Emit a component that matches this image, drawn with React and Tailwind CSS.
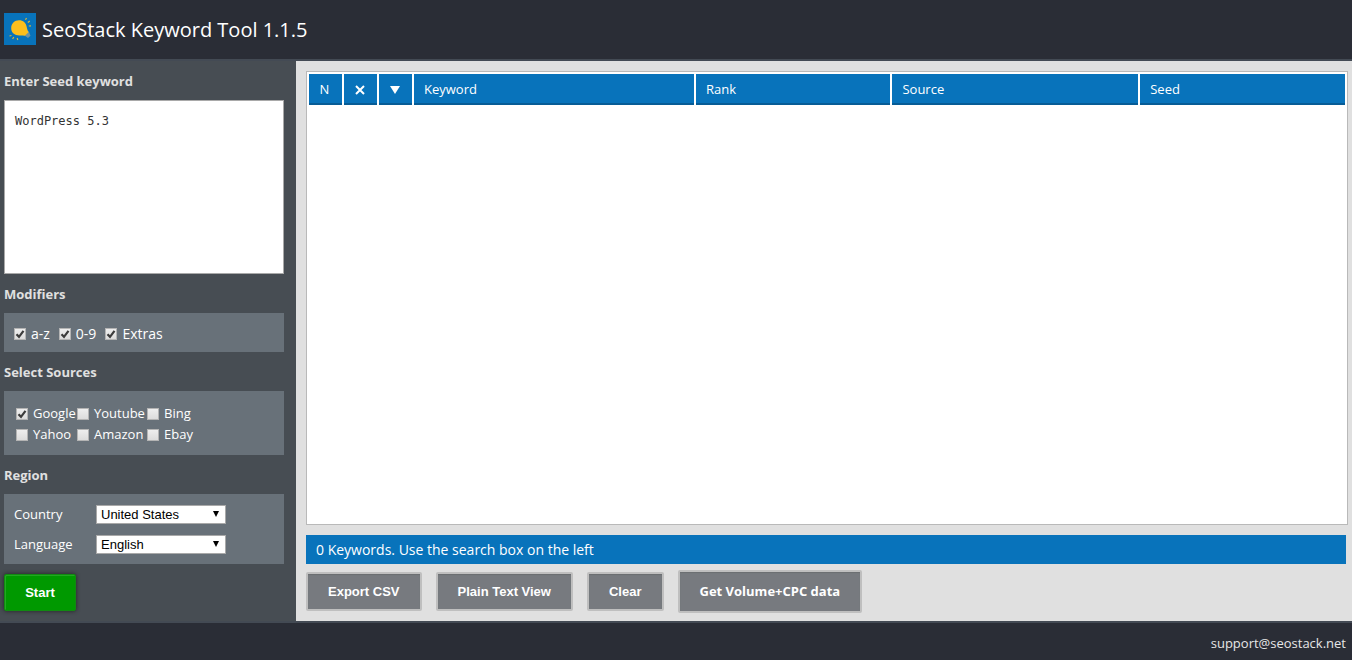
import { useState } from 'react';

const modifierList = ['a-z', '0-9', 'Extras'];
const sourceList = ['Google', 'Youtube', 'Bing', 'Yahoo', 'Amazon', 'Ebay'];

function Logo() {
  return (
    <svg className="w-8 h-8 shrink-0" viewBox="0 0 32 32" aria-hidden="true">
      <rect width="32" height="32" fill="#0873bb" />
      <path d="M20.5 22.500l4.200-4.500 1.800 4.800-2.500 2.200z" fill="#6f93a3" />
      <path d="M7.200 15.200c0-4.600 3.300-8 7.800-8 4.200 0 7 2.600 7.600 6.200.5 2.600 1.100 4.200 1.900 5.800l-3.700 3.600c-2-.5-3.400-.4-5.400-.4-4.800 0-8.200-2.900-8.200-7.200z" fill="#fdbf1d" />
      <path d="M21.500 6.800l1-1.800M23.800 9.500l2-1.500M24.800 13l2.200-.2M7.500 22.500l-2 .5M9.800 24l-1.200 2M13.200 25l.6 2" stroke="#d9b53a" strokeWidth="1.200" />
    </svg>
  );
}

function CheckOption({ name, checked, onChange }) {
  return (
    <label className="flex items-center gap-[5px]">
      <span className="relative flex">
        <input
          type="checkbox"
          checked={checked}
          onChange={onChange}
          className="peer appearance-none w-3 h-3 border border-[#b4b4b4] bg-linear-to-b from-[#eeeeee] to-[#dcdcdc]"
        />
        <svg className="absolute inset-0 hidden peer-checked:block pointer-events-none" viewBox="0 0 12 12" aria-hidden="true">
          <path d="M2.500 6.200l2.500 2.600 4.500-6" fill="none" stroke="#3c3c3c" strokeWidth="2.200" />
        </svg>
      </span>
      {name}
    </label>
  );
}

function SelectRow({ id, label, options }) {
  return (
    <div className="flex items-center h-[30px]">
      <label htmlFor={id} className="w-[82px] pt-0.5">{label}</label>
      <div className="relative">
        <select id={id} className="block appearance-none w-[130px] h-[19px] pl-1 bg-white border border-[#a9a9a9] font-['Liberation_Sans',sans-serif] text-[13px] leading-[17px] text-black">
          {options.map((option) => (
            <option key={option}>{option}</option>
          ))}
        </select>
        <svg className="absolute right-1.5 top-1.5 w-2 h-1.5 pointer-events-none" viewBox="0 0 8 6" aria-hidden="true">
          <path d="M1 0h6L4 6z" fill="#000" />
        </svg>
      </div>
    </div>
  );
}

function SideHeading({ children }) {
  return <h2 className="pt-[11px] pb-[9px] leading-[19px] text-[13px] font-bold text-[#e0e0e0]">{children}</h2>;
}

function GreyButton({ children }) {
  return (
    <button type="button" className="h-[39px] px-5 rounded-xs bg-[#777a7f] border-2 border-[#bfbfbf] shadow-[inset_0_1px_1px_#6b6e72] font-['Liberation_Sans',sans-serif] text-[13px] font-bold text-white">
      {children}
    </button>
  );
}

function App() {
  const [seed, setSeed] = useState('WordPress 5.3');
  const [selected, setSelected] = useState(['a-z', '0-9', 'Extras', 'Google']);

  const toggle = (name) => {
    setSelected((prev) => (prev.includes(name) ? prev.filter((n) => n !== name) : [...prev, name]));
  };

  return (
    <div className="min-h-screen flex flex-col bg-[#2a2d36] font-['Open_Sans',sans-serif] text-[13px] text-white">
      <header className="flex items-center gap-1.5 h-[59px] px-1 pb-0.5">
        <Logo />
        <h1 className="pt-0.5 text-xl">SeoStack Keyword Tool 1.1.5</h1>
      </header>

      <div className="flex-1 flex border-y-2 border-[#434a54]">
        <aside className="w-[296px] shrink-0 pl-1 pr-3 pb-[9px] bg-[#474d53]">
          <SideHeading><label htmlFor="seed">Enter Seed keyword</label></SideHeading>
          <textarea
            id="seed"
            value={seed}
            onChange={(e) => setSeed(e.target.value)}
            spellCheck={false}
            className="block w-full h-[174px] p-2.5 resize-none bg-white border border-[#a9a9a9] font-['DejaVu_Sans_Mono',monospace] text-xs leading-5 text-[#333333]"
          />

          <SideHeading>Modifiers</SideHeading>
          <div className="flex items-center gap-[9px] h-[39px] px-2.5 pt-0.5 bg-[#687179] text-sm">
            {modifierList.map((name) => (
              <CheckOption key={name} name={name} checked={selected.includes(name)} onChange={() => toggle(name)} />
            ))}
          </div>

          <SideHeading>Select Sources</SideHeading>
          <div className="grid grid-cols-[61px_70px_1fr] auto-rows-[21px] h-16 px-3 py-3 bg-[#687179]">
            {sourceList.map((name) => (
              <CheckOption key={name} name={name} checked={selected.includes(name)} onChange={() => toggle(name)} />
            ))}
          </div>

          <SideHeading>Region</SideHeading>
          <div className="px-2.5 py-[5px] bg-[#687179]">
            <SelectRow id="country" label="Country" options={['United States', 'United Kingdom', 'Canada']} />
            <SelectRow id="language" label="Language" options={['English', 'Spanish', 'German']} />
          </div>

          <button type="button" className="mt-2.5 w-[72px] h-[37px] rounded-xs bg-[#009900] border border-[#118a11] shadow-[0_0_4px_#222222,inset_1px_1px_0_#22a822] font-['Liberation_Sans',sans-serif] text-[13px] font-bold">
            Start
          </button>
        </aside>

        <main className="flex-1 flex flex-col pt-2.5 pb-2 pl-2.5 pr-1 bg-[#e0e0e0]">
          <div className="flex-1 bg-white border border-[#b9b9b9]">
            <table className="w-full table-fixed border-separate border-spacing-0.5 text-left">
              <thead>
                <tr className="[&>th]:h-[31px] [&>th]:pt-0.5 [&>th]:bg-[#0873bb] [&>th]:border-b-2 [&>th]:border-[#075c96] [&>th]:font-normal">
                  <th className="w-[33px] pr-0.5 text-center">N</th>
                  <th className="w-[33px] pr-0.5 text-center">
                    <svg className="inline w-2.5 h-2.5" viewBox="0 0 10 10" role="img" aria-label="Remove">
                      <path d="M1 1l8 8M9 1L1 9" stroke="#fff" strokeWidth="2" />
                    </svg>
                  </th>
                  <th className="w-[33px] pr-0.5 text-center">
                    <svg className="inline w-2.5 h-2.5" viewBox="0 0 10 10" role="img" aria-label="Sort">
                      <path d="M0 1h10L5 9z" fill="#fff" />
                    </svg>
                  </th>
                  <th className="px-2.5">Keyword</th>
                  <th className="w-[19%] px-2.5">Rank</th>
                  <th className="w-[24%] px-2.5">Source</th>
                  <th className="w-[20%] px-2.5">Seed</th>
                </tr>
              </thead>
              <tbody></tbody>
            </table>
          </div>

          <p className="mt-2.5 mr-0.5 px-2.5 pt-px bg-[#0873bb] text-sm/7">
            0 Keywords. Use the search box on the left
          </p>

          <div className="flex items-center gap-3.5 mt-1.5">
            <GreyButton>Export CSV</GreyButton>
            <GreyButton>Plain Text View</GreyButton>
            <GreyButton>Clear</GreyButton>
            <button type="button" className="h-[43px] px-5 rounded-xs bg-[#777a7f] border-2 border-[#bfbfbf] shadow-[inset_0_1px_1px_#6b6e72] text-[13px] font-bold">
              Get Volume+CPC data
            </button>
          </div>
        </main>
      </div>

      <footer className="flex items-center justify-end h-[37px] px-1.5 pt-1">
        <a href="mailto:support@seostack.net" className="text-[#e6e6e6]">support@seostack.net</a>
      </footer>
    </div>
  );
}

export default App;
